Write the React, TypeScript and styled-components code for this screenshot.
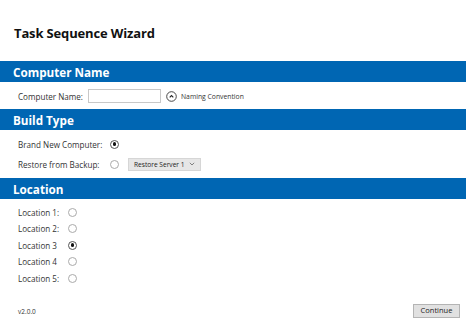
import React from 'react';
import styled, { createGlobalStyle } from 'styled-components';

const GlobalStyle = createGlobalStyle`
  html, body {
    margin: 0;
    padding: 0;
    background: #ffffff;
  }
  body {
    font-family: "Open Sans", "Noto Sans", "Liberation Sans", sans-serif;
    color: #222;
  }
`;

const Page = styled.div`
  width: 474px;
  height: 327px;
  display: flex;
  flex-direction: column;
  overflow: hidden;
`;

const Title = styled.h1`
  margin: 0;
  padding: 24px 0 0 14px;
  height: 37px;
  font-size: 13px;
  font-weight: 700;
  color: #111;
  letter-spacing: -0.15px;
`;

const Section = styled.section`
  display: flex;
  flex-direction: column;
`;

const SectionBar = styled.div`
  width: 466px;
  height: 21px;
  background: #0066b3;
  color: #fff;
  font-size: 11.7px;
  font-weight: 700;
  padding-left: 13px;
  box-sizing: border-box;
  display: flex;
  align-items: center;
`;

const Rows = styled.div<{ $gap: number; $pad: string }>`
  display: flex;
  flex-direction: column;
  gap: ${p => p.$gap}px;
  padding: ${p => p.$pad};
`;

const Row = styled.div`
  display: flex;
  align-items: center;
  height: 14px;
  padding-left: 18px;
  font-size: 8.1px;
  color: #333;
`;

const Label = styled.span<{ $w?: number }>`
  width: ${p => (p.$w ? `${p.$w}px` : 'auto')};
  flex-shrink: 0;
`;

const TextBox = styled.div`
  width: 73px;
  height: 14px;
  border: 1px solid #c8c8c8;
  box-sizing: border-box;
  margin-left: 5px;
`;

const InfoLink = styled.span`
  display: flex;
  align-items: center;
  margin-left: 5px;
  font-size: 6.8px;
  color: #333;
  gap: 4px;
`;

const Radio = styled.span<{ $on?: boolean }>`
  width: 7px;
  height: 7px;
  border-radius: 50%;
  border: 1px solid ${p => (p.$on ? '#555' : '#aaa')};
  display: inline-flex;
  align-items: center;
  justify-content: center;
  flex-shrink: 0;
  &::after {
    content: '';
    width: 3.5px;
    height: 3.5px;
    border-radius: 50%;
    background: ${p => (p.$on ? '#111' : 'transparent')};
  }
`;

const Select = styled.div`
  margin-left: 9px;
  width: 73px;
  height: 13px;
  background: #e6e6e6;
  border: 1px solid #d6d6d6;
  box-sizing: border-box;
  display: flex;
  align-items: center;
  justify-content: space-between;
  padding: 0 5px 0 5px;
  font-size: 6.6px;
  color: #222;
`;

const Footer = styled.div`
  margin-top: auto;
  display: flex;
  align-items: center;
  justify-content: space-between;
  padding: 0 14px 9px 18px;
`;

const Version = styled.span`
  font-size: 6.5px;
  color: #333;
`;

const Button = styled.button`
  width: 47px;
  height: 14px;
  padding: 0;
  background: #e1e1e1;
  border: 1px solid #b4b4b4;
  font-family: inherit;
  font-size: 7.5px;
  color: #222;
  line-height: 1;
`;

const UpIcon = () => (
  <svg width="11" height="11" viewBox="0 0 11 11">
    <circle cx="5.5" cy="5.5" r="4.8" fill="none" stroke="#333" strokeWidth="0.9" />
    <path d="M3.7 6.3 L5.5 4.5 L7.3 6.3" fill="none" stroke="#222" strokeWidth="1.1" />
  </svg>
);

const Chevron = () => (
  <svg width="6" height="4" viewBox="0 0 6 4">
    <path d="M0.8 0.8 L3 3 L5.2 0.8" fill="none" stroke="#666" strokeWidth="0.8" />
  </svg>
);

const locations = [
  { label: 'Location 1:', on: false },
  { label: 'Location 2:', on: false },
  { label: 'Location 3', on: true },
  { label: 'Location 4', on: false },
  { label: 'Location 5:', on: false },
];

export default function App() {
  return (
    <Page>
      <GlobalStyle />
      <Title>Task Sequence Wizard</Title>

      <Section>
        <SectionBar>Computer Name</SectionBar>
        <Rows $gap={0} $pad="7px 0 6px">
          <Row>
            <Label>Computer Name:</Label>
            <TextBox />
            <InfoLink>
              <UpIcon />
              Naming Convention
            </InfoLink>
          </Row>
        </Rows>
      </Section>

      <Section>
        <SectionBar>Build Type</SectionBar>
        <Rows $gap={6} $pad="7px 0 7px">
          <Row>
            <Label $w={92}>Brand New Computer:</Label>
            <Radio $on />
          </Row>
          <Row>
            <Label $w={92}>Restore from Backup:</Label>
            <Radio />
            <Select>
              Restore Server 1
              <Chevron />
            </Select>
          </Row>
        </Rows>
      </Section>

      <Section>
        <SectionBar>Location</SectionBar>
        <Rows $gap={2.5} $pad="6px 0 0">
          {locations.map(l => (
            <Row key={l.label}>
              <Label $w={50}>{l.label}</Label>
              <Radio $on={l.on} />
            </Row>
          ))}
        </Rows>
      </Section>

      <Footer>
        <Version>v2.0.0</Version>
        <Button>Continue</Button>
      </Footer>
    </Page>
  );
}
